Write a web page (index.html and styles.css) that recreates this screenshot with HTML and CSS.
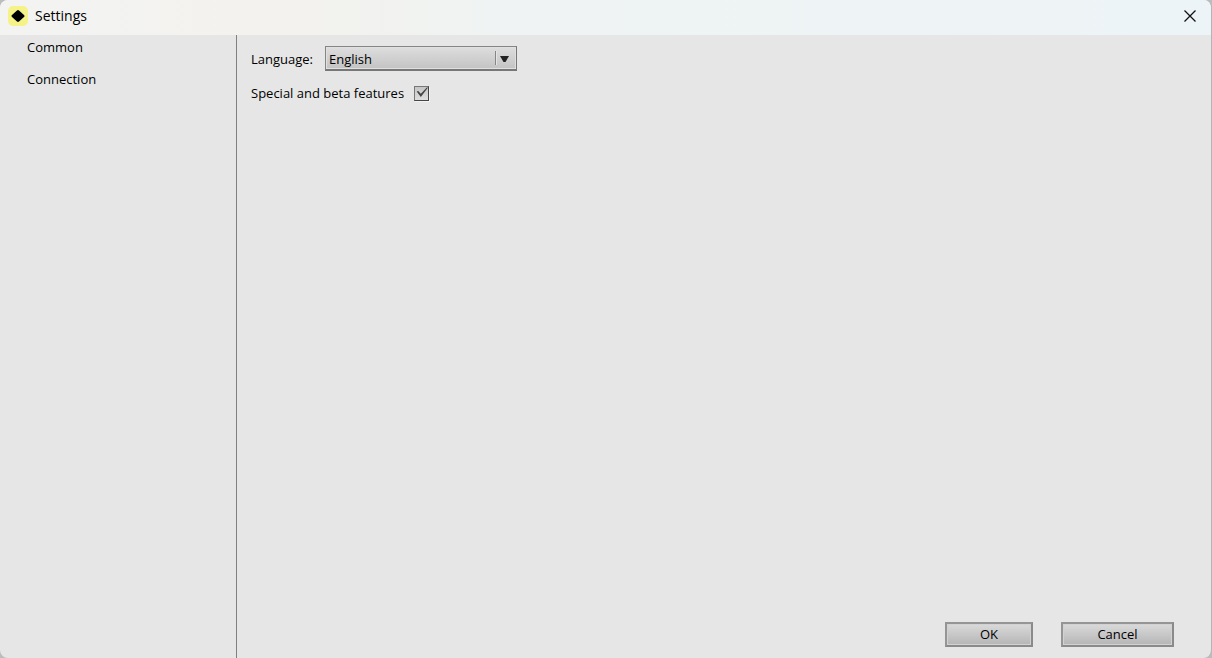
FILE: index.html
```html
<!DOCTYPE html>
<html lang="en">
<head>
    <meta charset="UTF-8">
    <meta name="viewport" content="width=device-width, initial-scale=1.0">
    <title>Settings</title>
    <link rel="stylesheet" href="styles.css">
</head>
<body>
    <div class="window">
        <header class="titlebar">
            <svg class="app-icon" viewBox="0 0 20 20" aria-hidden="true">
                <rect width="20" height="20" rx="5" fill="#f5f387"/>
                <path d="M10 5.500 L15 10 L10 14.500 L5 10 Z" fill="#000" stroke="#000" stroke-width="3" stroke-linejoin="round"/>
            </svg>
            <h1>Settings</h1>
            <button type="button" class="close" aria-label="Close">
                <svg viewBox="0 0 12 12" aria-hidden="true">
                    <path d="M0.500 0.500 L11.500 11.500 M11.500 0.500 L0.500 11.500" stroke="#111" stroke-width="1.300" fill="none"/>
                </svg>
            </button>
        </header>
        <div class="main">
            <nav class="sidebar">
                <a href="#common">Common</a>
                <a href="#connection">Connection</a>
            </nav>
            <form class="content">
                <div class="row language-row">
                    <label for="language">Language:</label>
                    <div class="select-box">
                        <select id="language">
                            <option>English</option>
                        </select>
                        <svg class="arrow" viewBox="0 0 14 14" aria-hidden="true">
                            <path d="M0.500 0 V14" stroke="#858585"/>
                            <path d="M1.500 0 V14" stroke="#e4e4e4"/>
                            <path d="M5 5 H14 L10.500 11 H8.500 Z" fill="#222"/>
                        </svg>
                    </div>
                </div>
                <div class="row">
                    <label for="beta">Special and beta features</label>
                    <input type="checkbox" id="beta" class="check" checked>
                </div>
                <div class="buttons">
                    <button type="submit" class="btn ok">OK</button>
                    <button type="button" class="btn cancel">Cancel</button>
                </div>
            </form>
        </div>
    </div>
</body>
</html>
```
FILE: styles.css
```css
* {
    box-sizing: border-box;
}
body {
    margin: 0;
    background: #bcbcbc;
    color: #000;
    font-family: "Open Sans", "Noto Sans", sans-serif;
    font-size: 13px;
    line-height: 20px;
}
.window {
    display: flex;
    flex-direction: column;
    min-height: 100vh;
    background: #e6e6e6;
    border-right: 1px solid #b4b4b4;
    border-radius: 8px;
    overflow: hidden;
}
.titlebar {
    display: flex;
    align-items: center;
    height: 35px;
    padding: 0 15px 3px 8px;
    background: linear-gradient(to right, #f3f3f2, #f3f2ee 25%, #eff3f3 42%, #edf4f7);
}
.app-icon {
    width: 20px;
    height: 20px;
}
.titlebar h1 {
    flex: 1;
    margin: 0 0 0 7px;
    font-size: 14px;
    font-weight: normal;
}
.close {
    display: flex;
    padding: 0;
    border: none;
    background: none;
}
.close svg {
    width: 12px;
    height: 12px;
}
.main {
    display: flex;
    flex: 1;
}
.sidebar {
    display: flex;
    flex-direction: column;
    gap: 12px;
    width: 237px;
    padding: 2px 27px;
    border-right: 1px solid #808080;
}
.sidebar a {
    color: #000;
    text-decoration: none;
}
.content {
    display: flex;
    flex: 1;
    flex-direction: column;
    gap: 12px;
    padding: 11px 37px 11px 14px;
}
.row {
    display: flex;
    align-items: center;
    gap: 10px;
}
.language-row {
    gap: 12px;
}
.select-box {
    position: relative;
    width: 192px;
    height: 25px;
}
.select-box select {
    width: 100%;
    height: 100%;
    padding: 2px 24px 0 3px;
    appearance: none;
    border: 1px solid #858585;
    border-bottom: 2px solid #777;
    border-right-color: #777;
    border-radius: 0;
    background: linear-gradient(#dedede, #c3c3c3);
    box-shadow: inset 0 0 0 1px #e0e0e0;
    color: #000;
    font: inherit;
}
.arrow {
    position: absolute;
    top: 5px;
    right: 8px;
    width: 14px;
    height: 14px;
    pointer-events: none;
}
.check {
    width: 15px;
    height: 15px;
    margin: 0;
    appearance: none;
    border: 1px solid #777;
    border-right-color: #444;
    border-bottom-color: #444;
    background: linear-gradient(#c5c5c5, #dedede);
    box-shadow: 1px 1px 0 #f3f3f3;
}
.check:checked::before {
    content: "";
    display: block;
    width: 13px;
    height: 13px;
    background: #444;
    clip-path: polygon(12% 38%, 24% 34%, 44% 56%, 92% 6%, 98% 10%, 44% 80%);
}
.buttons {
    display: flex;
    justify-content: flex-end;
    gap: 28px;
    margin-top: auto;
}
.btn {
    height: 25px;
    padding: 0 0 2px;
    border: 2px solid #8a8a8a;
    border-top-color: #959595;
    border-left-color: #959595;
    background: linear-gradient(#dadada, #b5b5b5);
    box-shadow: inset 0 0 0 1px #d2d2d2;
    color: #000;
    font: inherit;
}
.ok {
    width: 88px;
}
.cancel {
    width: 113px;
}
```
